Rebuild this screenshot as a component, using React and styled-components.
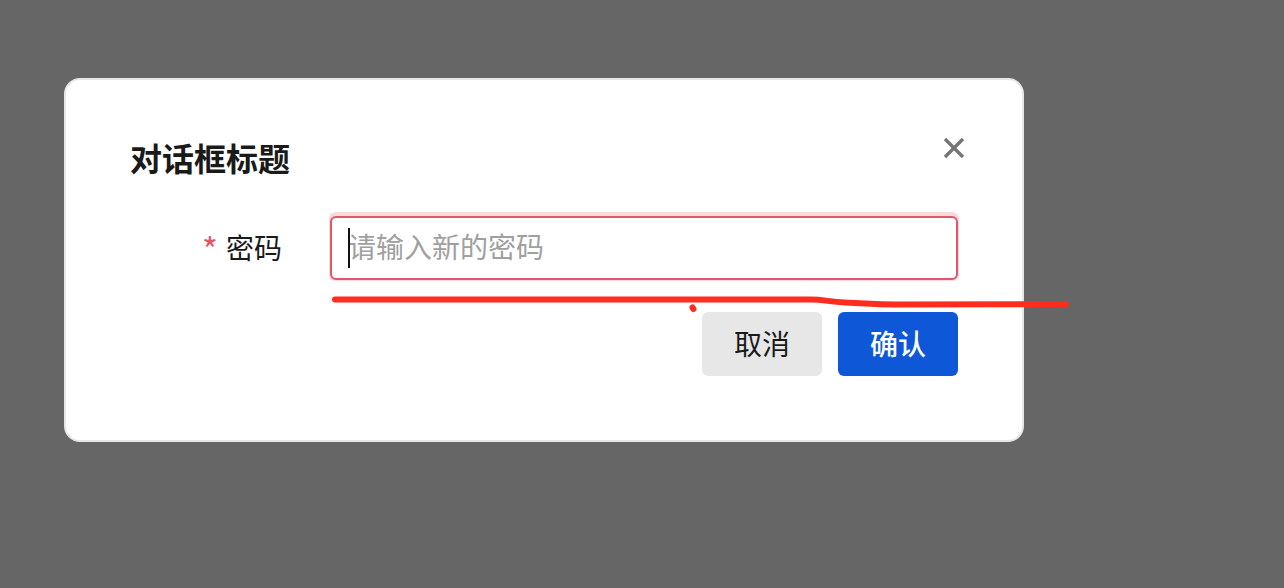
import React from "react";
import styled, { createGlobalStyle } from "styled-components";

const Global = createGlobalStyle`
  html, body { margin: 0; padding: 0; background: #666666; }
  * { box-sizing: border-box; }
  body { font-family: "Noto Sans CJK SC", "Noto Sans", sans-serif; }
`;

const Stage = styled.div`
  position: relative;
  width: 1284px;
  height: 588px;
  padding: 78px 0 0 64px;
  background: #666666;
  overflow: hidden;
`;

const Dialog = styled.div`
  width: 960px;
  height: 364px;
  padding: 42px 64px 0 64px;
  background: #ffffff;
  border: 2px solid #e7e7e7;
  border-radius: 16px;
  display: flex;
  flex-direction: column;
`;

const Header = styled.div`
  display: flex;
  justify-content: space-between;
  align-items: flex-start;
  height: 94px;
`;

const Title = styled.h2`
  margin: 0;
  height: 78px;
  font-size: 32px;
  line-height: 70px;
  font-weight: 700;
  color: #1a1a1a;
`;

const Close = styled.button`
  width: 32px;
  height: 32px;
  margin: 10px -12px 0 0;
  padding: 0;
  border: 0;
  background: none;
  color: #757575;
  display: flex;
  align-items: center;
  justify-content: center;
`;

const Row = styled.div`
  display: flex;
  align-items: center;
  height: 64px;
`;

const Label = styled.label`
  width: 200px;
  height: 64px;
  padding: 8px 48px 0 0;
  display: flex;
  flex: none;
  justify-content: flex-end;
  gap: 8px;
  font-size: 28px;
  line-height: 46px;
  color: #1a1a1a;
`;

const Star = styled.span`
  margin-top: 2px;
  font-size: 34px;
  color: #e2556a;
`;

const InputWrap = styled.div`
  position: relative;
  flex: 1;
  height: 64px;
`;

const Input = styled.input`
  width: 100%;
  height: 64px;
  padding: 0 16px 4px 16px;
  border: 2px solid #e2556a;
  border-radius: 6px;
  outline: none;
  box-shadow: 0 0 0 4px #f8d9dc;
  clip-path: inset(-4px -1px -1px -1px round 6px);
  background: #ffffff;
  font-family: inherit;
  font-size: 28px;
  color: #1a1a1a;
  &::placeholder { color: #a0a0a0; opacity: 1; }
`;

const Caret = styled.span`
  position: absolute;
  left: 18px;
  top: 12px;
  width: 2px;
  height: 40px;
  background: #111111;
`;

const Footer = styled.div`
  display: flex;
  justify-content: flex-end;
  gap: 16px;
  margin-top: 32px;
`;

const Button = styled.button`
  width: 120px;
  height: 64px;
  padding: 0 0 2px;
  border: 0;
  border-radius: 6px;
  font-family: inherit;
  font-size: 28px;
  font-weight: ${(p) => (p.$primary ? 500 : 400)};
  background: ${(p) => (p.$primary ? "#0e58d8" : "#e7e7e7")};
  color: ${(p) => (p.$primary ? "#ffffff" : "#1a1a1a")};
`;

const Scribble = styled.svg`
  position: absolute;
  left: 0;
  top: 0;
  pointer-events: none;
`;

export default function App() {
  return (
    <Stage>
      <Global />
      <Dialog>
        <Header>
          <Title>对话框标题</Title>
          <Close aria-label="关闭">
            <svg width="24" height="24" viewBox="0 0 24 24" fill="none" stroke="currentColor" strokeWidth="3.4">
              <path d="M3 3 L21 21 M21 3 L3 21" />
            </svg>
          </Close>
        </Header>
        <Row>
          <Label>
            <Star>*</Star>
            密码
          </Label>
          <InputWrap>
            <Input placeholder="请输入新的密码" />
            <Caret />
          </InputWrap>
        </Row>
        <Footer>
          <Button>取消</Button>
          <Button $primary>确认</Button>
        </Footer>
      </Dialog>
      <Scribble width="1284" height="588" viewBox="0 0 1284 588" fill="none" stroke="#ff2d20" strokeLinecap="round">
        <path strokeWidth="6" d="M335 299.5 L810 299.5 C826 299.5 828 302 845 302.5 C865 303 872 304.5 895 304.5 L1066 304" />
        <path strokeWidth="6" d="M692.5 307.5 L693.5 309" />
      </Scribble>
    </Stage>
  );
}
